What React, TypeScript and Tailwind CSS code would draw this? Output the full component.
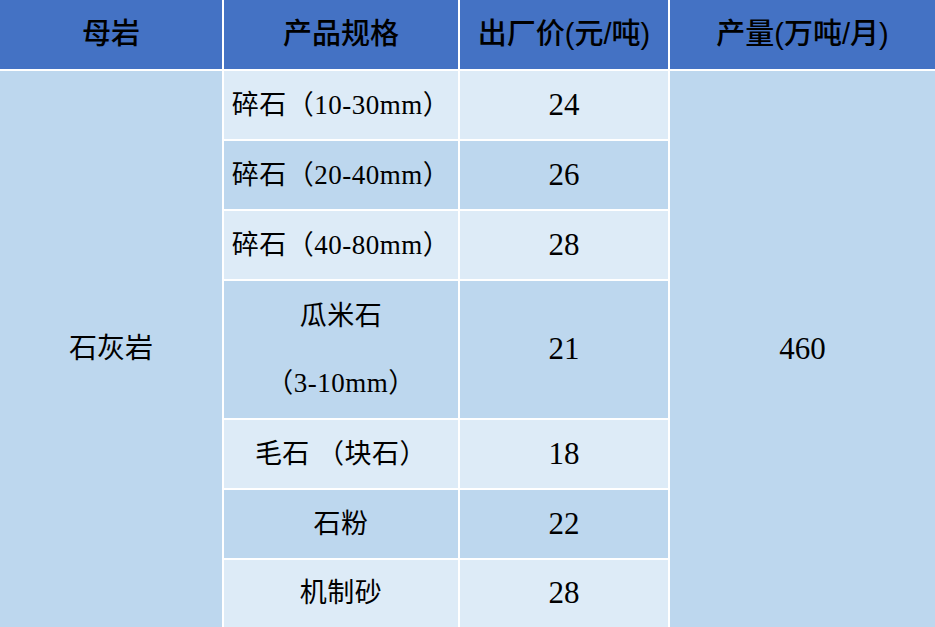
import React from 'react';

const rows = [
  { spec: ['碎石（10-30mm）'], price: '24', tall: false },
  { spec: ['碎石（20-40mm）'], price: '26', tall: false },
  { spec: ['碎石（40-80mm）'], price: '28', tall: false },
  { spec: ['瓜米石', '（3-10mm）'], price: '21', tall: true },
  { spec: ['毛石 （块石）'], price: '18', tall: false },
  { spec: ['石粉'], price: '22', tall: false },
  { spec: ['机制砂'], price: '28', tall: false },
];

const headers = ['母岩', '产品规格', '出厂价(元/吨)', '产量(万吨/月)'];

const rowStart = ['row-start-2', 'row-start-3', 'row-start-4', 'row-start-5', 'row-start-6', 'row-start-7', 'row-start-8'];

const serifCls = "font-['Liberation_Serif','Noto_Sans_CJK_SC',serif]";

const App: React.FC = () => {
  return (
    <div className="w-[935px] h-[627px] overflow-hidden bg-white">
      <div className="grid grid-cols-[222px_234px_208px_1fr] grid-rows-[69px_68px_68px_68px_137px_68px_68px_67px] gap-[2px] bg-white h-[627px]">
        {headers.map((h) => (
          <div
            key={h}
            className="flex items-center justify-center bg-[#4472C4] text-[29px] font-medium text-black font-['Liberation_Sans','Noto_Sans_CJK_SC',sans-serif]"
          >
            {h}
          </div>
        ))}

        <div className={`row-start-2 row-span-7 col-start-1 flex items-center justify-center bg-[#BDD7EE] text-[28px] text-black ${serifCls}`}>
          石灰岩
        </div>

        {rows.map((r, i) => {
          const bg = i % 2 === 0 ? 'bg-[#DDEBF7]' : 'bg-[#BDD7EE]';
          return (
            <React.Fragment key={i}>
              <div
                className={`col-start-2 ${rowStart[i]} flex flex-col items-center justify-center text-[27px] tracking-[0.5px] text-black ${bg} ${serifCls} ${r.tall ? 'gap-[40px]' : ''}`}
              >
                {r.spec.map((s) => (
                  <span key={s} className="whitespace-pre leading-none">{s}</span>
                ))}
              </div>
              <div className={`col-start-3 ${rowStart[i]} flex items-center justify-center text-[31px] text-black ${bg} ${serifCls}`}>
                {r.price}
              </div>
            </React.Fragment>
          );
        })}

        <div className={`row-start-2 row-span-7 col-start-4 flex items-center justify-center bg-[#BDD7EE] text-[31px] text-black ${serifCls}`}>
          460
        </div>
      </div>
    </div>
  );
};

export default App;
